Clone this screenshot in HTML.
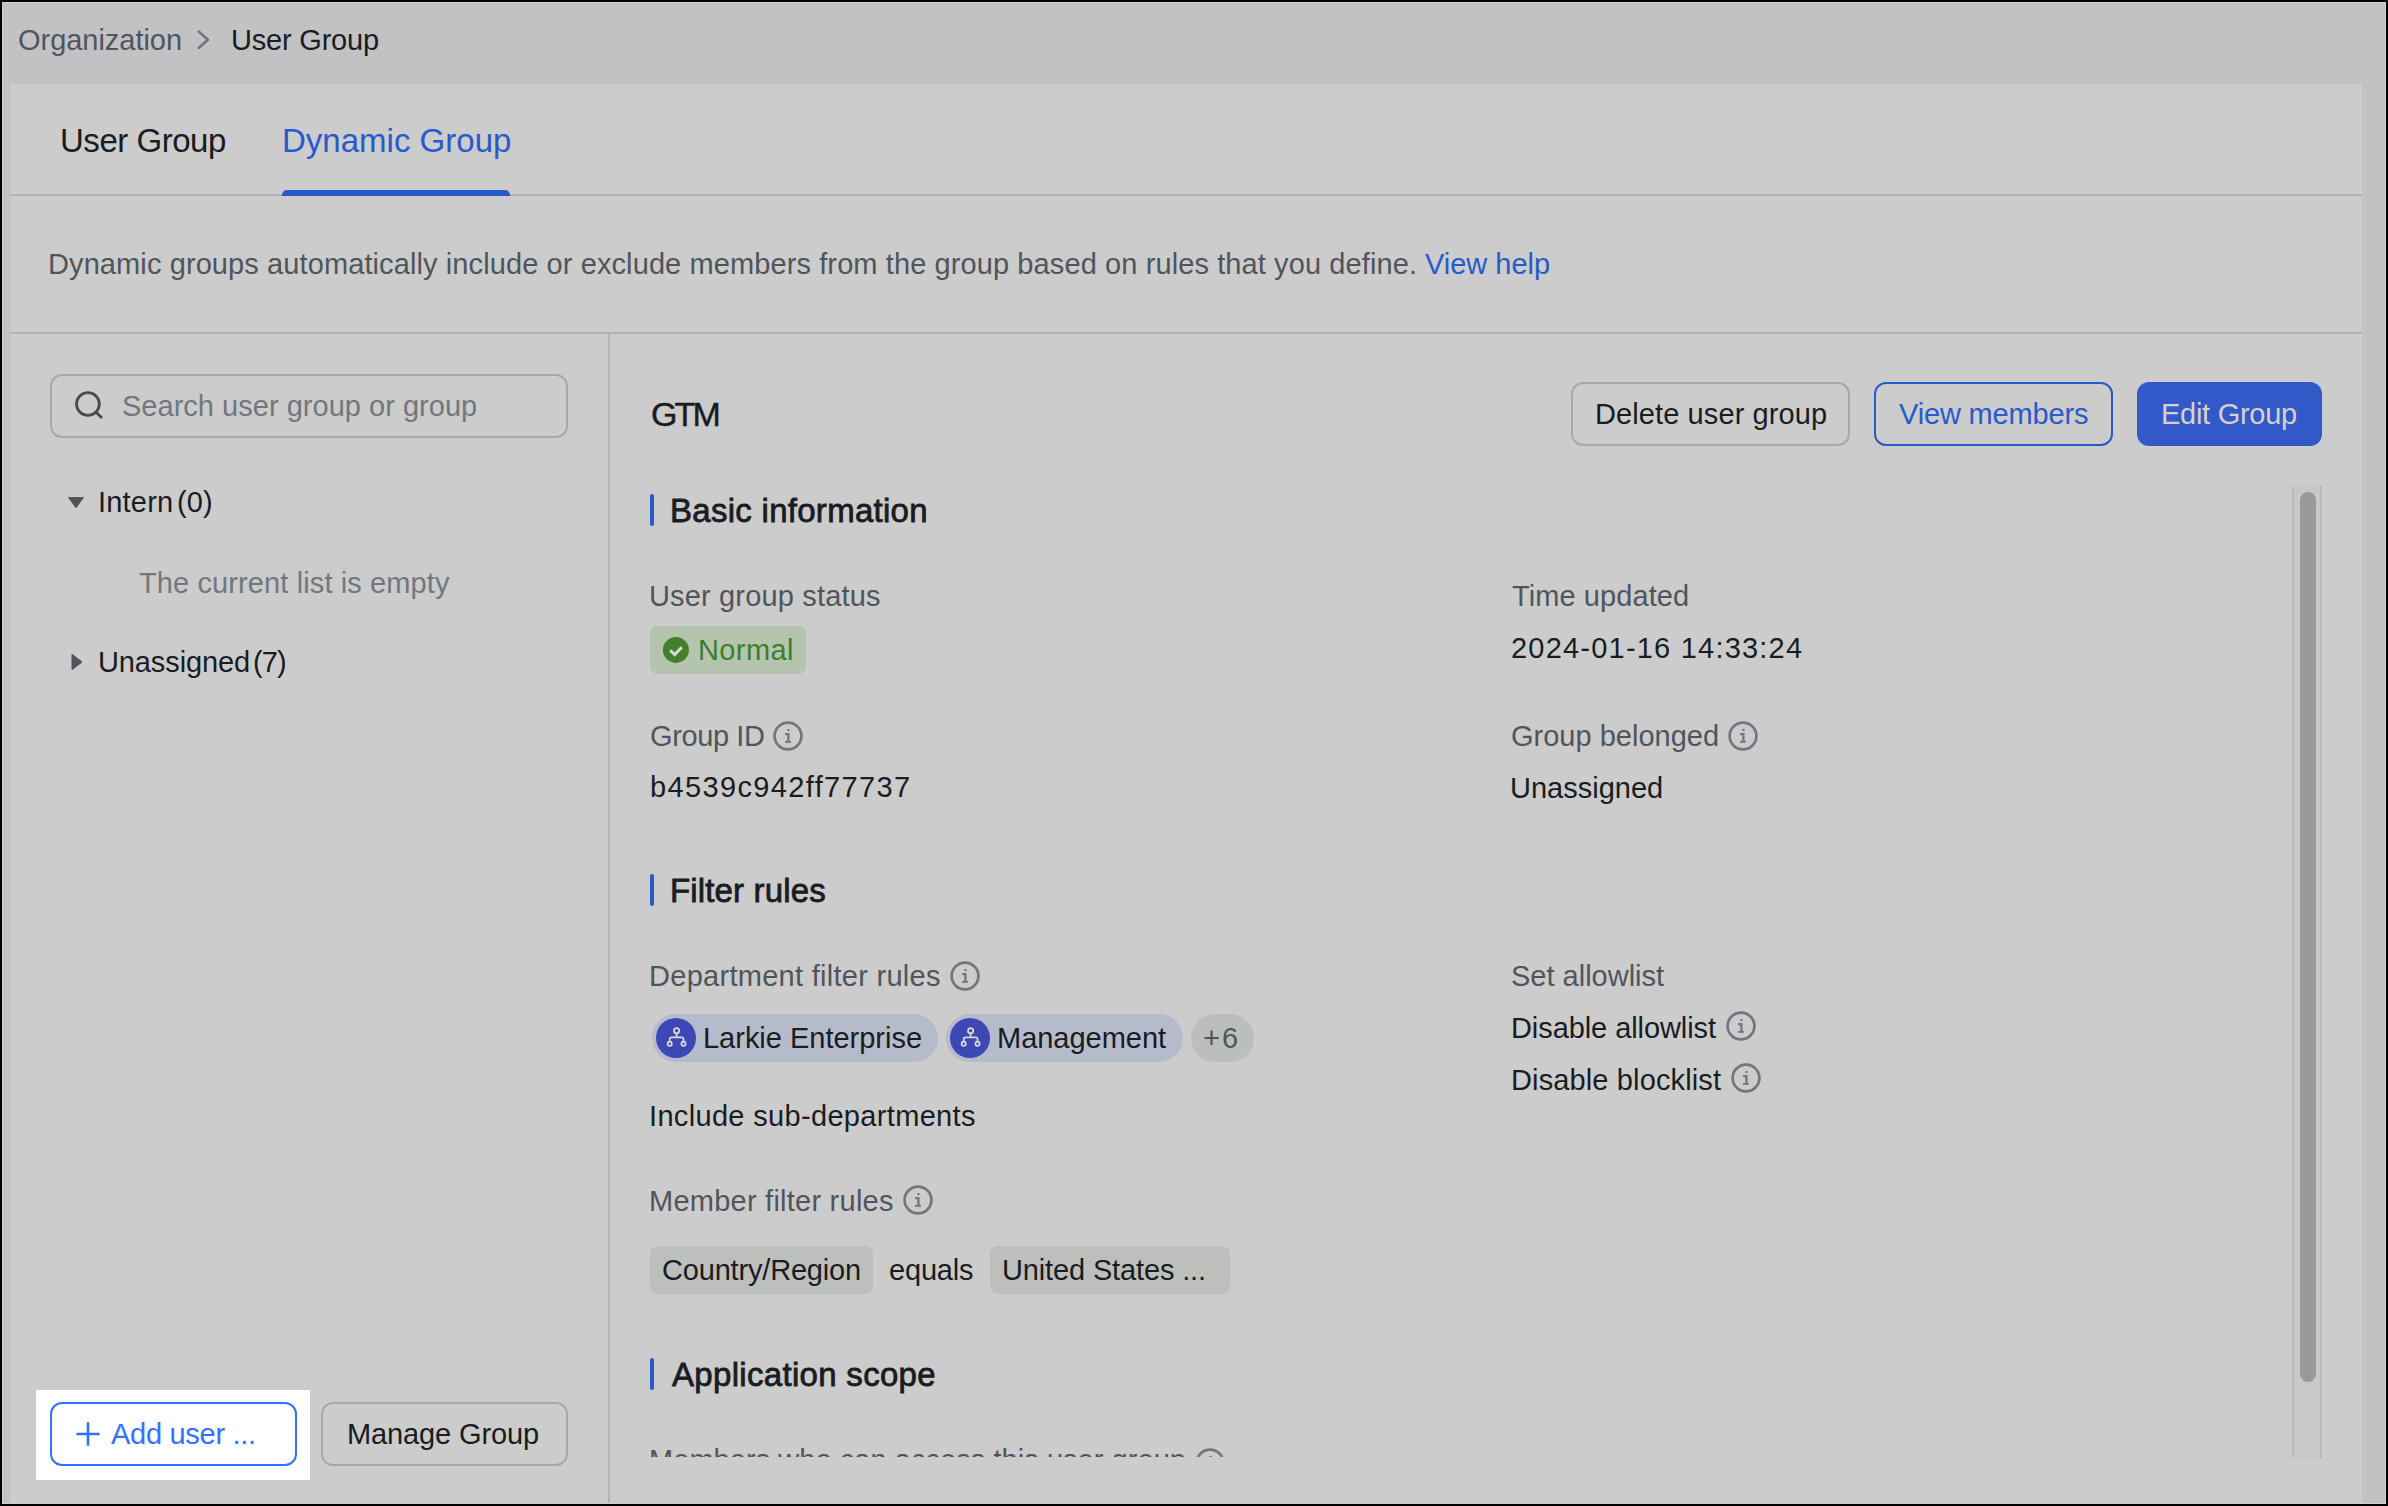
<!DOCTYPE html>
<html><head><meta charset="utf-8"><style>
*{box-sizing:border-box;margin:0;padding:0}
html,body{width:2388px;height:1506px;overflow:hidden;background:#000}
body{position:relative;font-family:"Liberation Sans",sans-serif}
.t{position:absolute;white-space:nowrap;line-height:1}
.b{position:absolute}
.ic{position:absolute}
.av{position:absolute;width:40px;height:40px;border-radius:50%;background:#3d47b5}
</style></head><body>
<div class="b" style="left:2px;top:2px;width:2384px;height:1502px;background:#c2c2c4"></div>
<div class="b" style="left:10px;top:84px;width:2352px;height:1420px;background:#cccccc"></div>
<!-- breadcrumb chevron -->
<svg class="ic" style="left:190px;top:24px" width="26" height="32" viewBox="0 0 26 32"><path d="M8.9 7.6L17.9 15.8L8.9 23.8" fill="none" stroke="#6f737b" stroke-width="2.6" stroke-linecap="round" stroke-linejoin="round"/></svg>
<!-- tabs -->
<div class="b" style="left:10px;top:194px;width:2352px;height:2px;background:#b2b3b6"></div>
<div class="b" style="left:282px;top:190px;width:228px;height:6px;background:#295acc;border-radius:5px 5px 0 0"></div>
<div class="b" style="left:10px;top:332px;width:2352px;height:2px;background:#b2b3b6"></div>
<div class="b" style="left:608px;top:334px;width:2px;height:1170px;background:#b2b3b6"></div>
<!-- search -->
<div class="b" style="left:50px;top:374px;width:518px;height:64px;border:2px solid #a6a9ab;border-radius:12px"></div>
<svg class="ic" style="left:70px;top:386px" width="40" height="40" viewBox="0 0 40 40"><circle cx="17.9" cy="18" r="11.4" fill="none" stroke="#484c52" stroke-width="2.8"/><path d="M26.3 26.4L31.2 31.3" fill="none" stroke="#484c52" stroke-width="2.8" stroke-linecap="round"/></svg>
<!-- tree triangles -->
<svg class="ic" style="left:64px;top:492px" width="24" height="20" viewBox="0 0 24 20"><path d="M4.5 5.6H19.5L12 15.8Z" fill="#4f535a" stroke="#4f535a" stroke-width="1" stroke-linejoin="round"/></svg>
<svg class="ic" style="left:66px;top:650px" width="20" height="24" viewBox="0 0 20 24"><path d="M6 4.3V19.7L16 12Z" fill="#4f535a" stroke="#4f535a" stroke-width="1" stroke-linejoin="round"/></svg>
<!-- bottom buttons -->
<div class="b" style="left:36px;top:1390px;width:274px;height:90px;background:#fff"></div>
<div class="b" style="left:50px;top:1402px;width:247px;height:64px;border:2px solid #3370ff;border-radius:12px"></div>
<svg class="ic" style="left:72px;top:1420px" width="32" height="30" viewBox="0 0 32 30"><path d="M16 2.2V25.8M4.4 14H27.6" fill="none" stroke="#3370ff" stroke-width="2.6"/></svg>
<div class="b" style="left:321px;top:1402px;width:247px;height:64px;border:2px solid #a6a9ab;border-radius:12px"></div>
<!-- header buttons -->
<div class="b" style="left:1571px;top:382px;width:279px;height:64px;border:2px solid #a6a9ab;border-radius:12px"></div>
<div class="b" style="left:1874px;top:382px;width:239px;height:64px;border:2px solid #295acc;border-radius:12px"></div>
<div class="b" style="left:2137px;top:382px;width:185px;height:64px;background:#3359c9;border-radius:12px"></div>
<!-- section bars -->
<div class="b" style="left:650px;top:494px;width:4px;height:32px;background:#295acc;border-radius:2px"></div>
<div class="b" style="left:650px;top:874px;width:4px;height:32px;background:#295acc;border-radius:2px"></div>
<div class="b" style="left:650px;top:1358px;width:4px;height:32px;background:#295acc;border-radius:2px"></div>
<!-- normal tag -->
<div class="b" style="left:650px;top:626px;width:156px;height:48px;background:#b4c4ae;border-radius:8px"></div>
<svg class="ic" style="left:662px;top:636px" width="28" height="28" viewBox="0 0 28 28"><circle cx="13.9" cy="13.9" r="13" fill="#43802e"/><path d="M8.2 14.2L12.6 18.6L19.8 11.2" fill="none" stroke="#d9d9d9" stroke-width="3"/></svg>
<!-- dept tags -->
<div class="b" style="left:652px;top:1014px;width:286px;height:48px;background:#b6bbcb;border-radius:24px"></div>
<div class="b" style="left:946px;top:1014px;width:237px;height:48px;background:#b6bbcb;border-radius:24px"></div>
<div class="b" style="left:1191px;top:1014px;width:63px;height:48px;background:#bcbebc;border-radius:24px"></div>
<div class="av" style="left:656px;top:1018px"><svg width="40" height="40" viewBox="0 0 40 40"><g fill="none" stroke="#d8d8d4" stroke-width="1.8" stroke-linecap="round" stroke-linejoin="round"><circle cx="20.6" cy="12.8" r="2.6"/><path d="M20.6 15.4V19.3M13.7 23.7V21.1Q13.7 19.3 15.5 19.3H25.7Q27.5 19.3 27.5 21.1V23.7"/><circle cx="13.7" cy="25.8" r="2.1"/><circle cx="27.5" cy="25.8" r="2.1"/></g></svg></div>
<div class="av" style="left:950px;top:1018px"><svg width="40" height="40" viewBox="0 0 40 40"><g fill="none" stroke="#d8d8d4" stroke-width="1.8" stroke-linecap="round" stroke-linejoin="round"><circle cx="20.6" cy="12.8" r="2.6"/><path d="M20.6 15.4V19.3M13.7 23.7V21.1Q13.7 19.3 15.5 19.3H25.7Q27.5 19.3 27.5 21.1V23.7"/><circle cx="13.7" cy="25.8" r="2.1"/><circle cx="27.5" cy="25.8" r="2.1"/></g></svg></div>
<!-- member rule tags -->
<div class="b" style="left:650px;top:1246px;width:223px;height:48px;background:#bdbfbd;border-radius:8px"></div>
<div class="b" style="left:990px;top:1246px;width:240px;height:48px;background:#bdbfbd;border-radius:8px"></div>
<!-- info icons -->
<svg class="ic" style="left:773px;top:721px" width="30" height="30" viewBox="0 0 30 30"><circle cx="15" cy="15" r="13.4" fill="none" stroke="#72777e" stroke-width="2.7"/><rect x="14.3" y="8" width="2.3" height="2" fill="#72777e"/><path d="M12.1 13.2H15.4V20.5" fill="none" stroke="#72777e" stroke-width="2.3"/><path d="M12 20.9H17.9" fill="none" stroke="#72777e" stroke-width="1.9"/></svg>
<svg class="ic" style="left:1728px;top:721px" width="30" height="30" viewBox="0 0 30 30"><circle cx="15" cy="15" r="13.4" fill="none" stroke="#72777e" stroke-width="2.7"/><rect x="14.3" y="8" width="2.3" height="2" fill="#72777e"/><path d="M12.1 13.2H15.4V20.5" fill="none" stroke="#72777e" stroke-width="2.3"/><path d="M12 20.9H17.9" fill="none" stroke="#72777e" stroke-width="1.9"/></svg>
<svg class="ic" style="left:950px;top:961px" width="30" height="30" viewBox="0 0 30 30"><circle cx="15" cy="15" r="13.4" fill="none" stroke="#72777e" stroke-width="2.7"/><rect x="14.3" y="8" width="2.3" height="2" fill="#72777e"/><path d="M12.1 13.2H15.4V20.5" fill="none" stroke="#72777e" stroke-width="2.3"/><path d="M12 20.9H17.9" fill="none" stroke="#72777e" stroke-width="1.9"/></svg>
<svg class="ic" style="left:1726px;top:1011px" width="30" height="30" viewBox="0 0 30 30"><circle cx="15" cy="15" r="13.4" fill="none" stroke="#72777e" stroke-width="2.7"/><rect x="14.3" y="8" width="2.3" height="2" fill="#72777e"/><path d="M12.1 13.2H15.4V20.5" fill="none" stroke="#72777e" stroke-width="2.3"/><path d="M12 20.9H17.9" fill="none" stroke="#72777e" stroke-width="1.9"/></svg>
<svg class="ic" style="left:1731px;top:1063px" width="30" height="30" viewBox="0 0 30 30"><circle cx="15" cy="15" r="13.4" fill="none" stroke="#72777e" stroke-width="2.7"/><rect x="14.3" y="8" width="2.3" height="2" fill="#72777e"/><path d="M12.1 13.2H15.4V20.5" fill="none" stroke="#72777e" stroke-width="2.3"/><path d="M12 20.9H17.9" fill="none" stroke="#72777e" stroke-width="1.9"/></svg>
<svg class="ic" style="left:903px;top:1185px" width="30" height="30" viewBox="0 0 30 30"><circle cx="15" cy="15" r="13.4" fill="none" stroke="#72777e" stroke-width="2.7"/><rect x="14.3" y="8" width="2.3" height="2" fill="#72777e"/><path d="M12.1 13.2H15.4V20.5" fill="none" stroke="#72777e" stroke-width="2.3"/><path d="M12 20.9H17.9" fill="none" stroke="#72777e" stroke-width="1.9"/></svg>
<svg class="ic" style="left:1195px;top:1448px" width="30" height="30" viewBox="0 0 30 30"><circle cx="15" cy="15" r="13.4" fill="none" stroke="#72777e" stroke-width="2.7"/><rect x="14.3" y="8" width="2.3" height="2" fill="#72777e"/><path d="M12.1 13.2H15.4V20.5" fill="none" stroke="#72777e" stroke-width="2.3"/><path d="M12 20.9H17.9" fill="none" stroke="#72777e" stroke-width="1.9"/></svg>
<!-- scrollbar -->
<div class="b" style="left:2292px;top:486px;width:30px;height:972px;background:#c8c8c8;border-left:2px solid #bbbbbb;border-right:2px solid #bbbbbb"></div>
<div class="b" style="left:2300px;top:492px;width:16px;height:890px;background:#999999;border-radius:8px"></div>
<!-- texts -->
<div class="t" id="bc1" style="left:18.0px;top:26px;font-size:29px;font-weight:400;color:#50555c;letter-spacing:-0.03px">Organization</div>
<div class="t" id="bc2" style="left:231.0px;top:26px;font-size:29px;font-weight:400;color:#191c21;letter-spacing:-0.20px">User Group</div>
<div class="t" id="tab1" style="left:60.0px;top:124px;font-size:33px;font-weight:400;color:#191c21;letter-spacing:-0.47px">User Group</div>
<div class="t" id="tab2" style="left:282.0px;top:124px;font-size:33px;font-weight:400;color:#295acc;letter-spacing:0.01px">Dynamic Group</div>
<div class="t" id="desc" style="left:48.0px;top:250px;font-size:29px;font-weight:400;color:#50555c;letter-spacing:0.10px">Dynamic groups automatically include or exclude members from the group based on rules that you define.</div>
<div class="t" id="help" style="left:1425.0px;top:250px;font-size:29px;font-weight:400;color:#295acc;letter-spacing:-0.01px">View help</div>
<div class="t" id="search" style="left:122.0px;top:392px;font-size:29px;font-weight:400;color:#72777e;letter-spacing:0.02px">Search user group or group</div>
<div class="t" id="intern" style="left:98.0px;top:488px;font-size:29px;font-weight:400;color:#191c21;letter-spacing:0.19px">Intern</div>
<div class="t" id="intern2" style="left:177.0px;top:488px;font-size:29px;font-weight:400;color:#191c21;letter-spacing:0.11px">(0)</div>
<div class="t" id="empty" style="left:139.0px;top:569px;font-size:29px;font-weight:400;color:#72777e;letter-spacing:0.11px">The current list is empty</div>
<div class="t" id="unas" style="left:98.0px;top:648px;font-size:29px;font-weight:400;color:#191c21;letter-spacing:-0.11px">Unassigned</div>
<div class="t" id="unas2" style="left:253.0px;top:648px;font-size:29px;font-weight:400;color:#191c21;letter-spacing:-0.89px">(7)</div>
<div class="t" id="manage" style="left:347.0px;top:1420px;font-size:29px;font-weight:400;color:#191c21;letter-spacing:-0.12px">Manage Group</div>
<div class="t" id="gtm" style="left:651.0px;top:397px;font-size:34px;font-weight:400;color:#191c21;letter-spacing:-2.83px;-webkit-text-stroke:0.45px #191c21">GTM</div>
<div class="t" id="del" style="left:1595.0px;top:400px;font-size:29px;font-weight:400;color:#191c21;letter-spacing:0.10px">Delete user group</div>
<div class="t" id="view" style="left:1899.0px;top:400px;font-size:29px;font-weight:400;color:#295acc;letter-spacing:-0.16px">View members</div>
<div class="t" id="edit" style="left:2161.0px;top:400px;font-size:29px;font-weight:400;color:#d4d2cc;letter-spacing:-0.28px">Edit Group</div>
<div class="t" id="basic" style="left:670.0px;top:494px;font-size:33px;font-weight:400;color:#191c21;letter-spacing:0.28px;-webkit-text-stroke:0.8px #191c21">Basic information</div>
<div class="t" id="ugs" style="left:649.0px;top:582px;font-size:29px;font-weight:400;color:#50555c;letter-spacing:0.16px">User group status</div>
<div class="t" id="normal" style="left:698.0px;top:636px;font-size:29px;font-weight:400;color:#3b7f2a;letter-spacing:0.40px">Normal</div>
<div class="t" id="tu" style="left:1512.0px;top:582px;font-size:29px;font-weight:400;color:#50555c;letter-spacing:0.08px">Time updated</div>
<div class="t" id="time" style="left:1511.0px;top:634px;font-size:29px;font-weight:400;color:#191c21;letter-spacing:1.21px">2024-01-16 14:33:24</div>
<div class="t" id="gid" style="left:650.0px;top:722px;font-size:29px;font-weight:400;color:#50555c;letter-spacing:-0.39px">Group ID</div>
<div class="t" id="gidv" style="left:650.0px;top:773px;font-size:29px;font-weight:400;color:#191c21;letter-spacing:1.36px">b4539c942ff77737</div>
<div class="t" id="gb" style="left:1511.0px;top:722px;font-size:29px;font-weight:400;color:#50555c;letter-spacing:0.01px">Group belonged</div>
<div class="t" id="gbv" style="left:1510.0px;top:774px;font-size:29px;font-weight:400;color:#191c21;letter-spacing:-0.00px">Unassigned</div>
<div class="t" id="filter" style="left:670.0px;top:874px;font-size:33px;font-weight:400;color:#191c21;letter-spacing:0.15px;-webkit-text-stroke:0.8px #191c21">Filter rules</div>
<div class="t" id="dfr" style="left:649.0px;top:962px;font-size:29px;font-weight:400;color:#50555c;letter-spacing:0.28px">Department filter rules</div>
<div class="t" id="lark" style="left:703.0px;top:1024px;font-size:29px;font-weight:400;color:#191c21;letter-spacing:-0.01px">Larkie Enterprise</div>
<div class="t" id="mgmt" style="left:997.0px;top:1024px;font-size:29px;font-weight:400;color:#191c21;letter-spacing:-0.02px">Management</div>
<div class="t" id="plus6" style="left:1203.0px;top:1024px;font-size:29px;font-weight:400;color:#50555c;letter-spacing:2.06px">+6</div>
<div class="t" id="isd" style="left:649.0px;top:1102px;font-size:29px;font-weight:400;color:#191c21;letter-spacing:0.33px">Include sub-departments</div>
<div class="t" id="sal" style="left:1511.0px;top:962px;font-size:29px;font-weight:400;color:#50555c;letter-spacing:-0.00px">Set allowlist</div>
<div class="t" id="dal" style="left:1511.0px;top:1014px;font-size:29px;font-weight:400;color:#191c21;letter-spacing:-0.08px">Disable allowlist</div>
<div class="t" id="dbl" style="left:1511.0px;top:1066px;font-size:29px;font-weight:400;color:#191c21;letter-spacing:0.13px">Disable blocklist</div>
<div class="t" id="mfr" style="left:649.0px;top:1187px;font-size:29px;font-weight:400;color:#50555c;letter-spacing:0.24px">Member filter rules</div>
<div class="t" id="cr" style="left:662.0px;top:1256px;font-size:29px;font-weight:400;color:#191c21;letter-spacing:-0.18px">Country/Region</div>
<div class="t" id="eq" style="left:889.0px;top:1256px;font-size:29px;font-weight:400;color:#191c21;letter-spacing:-0.19px">equals</div>
<div class="t" id="us" style="left:1002.0px;top:1256px;font-size:29px;font-weight:400;color:#191c21;letter-spacing:-0.14px">United States ...</div>
<div class="t" id="app" style="left:672.0px;top:1358px;font-size:33px;font-weight:400;color:#191c21;letter-spacing:0.31px;-webkit-text-stroke:0.8px #191c21">Application scope</div>
<div class="t" id="mwc" style="left:649.0px;top:1446px;font-size:29px;font-weight:400;color:#50555c;letter-spacing:0.05px">Members who can access this user group</div>
<div class="t" id="add" style="left:111.0px;top:1420px;font-size:29px;font-weight:400;color:#3370ff;letter-spacing:-0.29px">Add user ...</div>
<div class="b" style="left:612px;top:1457px;width:1678px;height:47px;background:#cccccc"></div>
<div class="b" style="left:2px;top:2px;width:2384px;height:1502px;border:1px solid #d0d0d2"></div>
</body></html>
